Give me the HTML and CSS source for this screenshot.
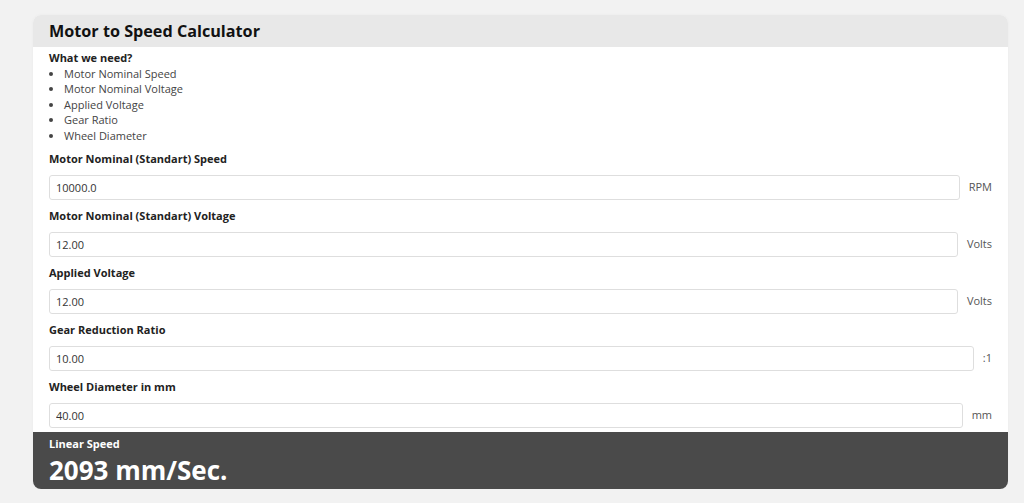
FILE: index.html
```html
<!DOCTYPE html>
<html>
<head>
<meta charset="utf-8">
<link rel="stylesheet" href="styles.css">
</head>
<body>
<div class="card">
  <div class="card-header"><h1 class="title">Motor to Speed Calculator</h1></div>
  <div class="card-body">
    <div class="need-title">What we need?</div>
    <ul class="need-list">
      <li>Motor Nominal Speed</li>
      <li>Motor Nominal Voltage</li>
      <li>Applied Voltage</li>
      <li>Gear Ratio</li>
      <li>Wheel Diameter</li>
    </ul>
    <div class="field">
      <label class="field-label">Motor Nominal (Standart) Speed</label>
      <div class="field-row"><input class="field-input" type="text" value="10000.0"><span class="unit">RPM</span></div>
    </div>
    <div class="field">
      <label class="field-label">Motor Nominal (Standart) Voltage</label>
      <div class="field-row"><input class="field-input" type="text" value="12.00"><span class="unit">Volts</span></div>
    </div>
    <div class="field">
      <label class="field-label">Applied Voltage</label>
      <div class="field-row"><input class="field-input" type="text" value="12.00"><span class="unit">Volts</span></div>
    </div>
    <div class="field">
      <label class="field-label">Gear Reduction Ratio</label>
      <div class="field-row"><input class="field-input" type="text" value="10.00"><span class="unit">:1</span></div>
    </div>
    <div class="field">
      <label class="field-label">Wheel Diameter in mm</label>
      <div class="field-row"><input class="field-input" type="text" value="40.00"><span class="unit">mm</span></div>
    </div>
  </div>
  <div class="result">
    <div class="result-label">Linear Speed</div>
    <div class="result-value">2093 mm/Sec.</div>
  </div>
</div>
</body>
</html>
```
FILE: styles.css
```css
html, body {
  margin: 0;
  padding: 0;
  background: #f2f2f2;
  font-family: "Open Sans", "Liberation Sans", sans-serif;
  color: #333;
}
body {
  padding: 15px 16px 0 33px;
}
.card {
  background: #fff;
  border-radius: 8px;
  overflow: hidden;
  box-shadow: 0 0 3px rgba(0,0,0,0.04);
}
.card-header {
  height: 32px;
  background: #e8e8e8;
  display: flex;
  align-items: center;
  padding: 0 16px;
}
.title {
  margin: 0;
  font-size: 16.2px;
  font-weight: 700;
  color: #111;
}
.card-body {
  padding: 3px 16px 4px 16px;
  font-size: 11px;
  line-height: 15.6px;
}
.need-title {
  font-weight: 700;
  color: #222;
}
.need-list {
  margin: 0 0 7px 0;
  padding-left: 15px;
  color: #444;
}
.field-label {
  display: block;
  font-weight: 700;
  color: #222;
  line-height: 16px;
  margin-bottom: 8px;
}
.field-row {
  display: flex;
  align-items: center;
  margin-bottom: 8px;
}
.field:last-child .field-row {
  margin-bottom: 0;
}
.field-input {
  flex: 1;
  height: 25px;
  box-sizing: border-box;
  border: 1px solid #dedede;
  border-radius: 3px;
  padding: 0 6px;
  font-family: inherit;
  font-size: 11px;
  color: #333;
  background: #fff;
  outline: none;
}
.unit {
  padding-left: 9px;
  color: #555;
  font-size: 11px;
}
.result {
  background: #4a4a4a;
  color: #fff;
  padding: 4px 16px 1px 16px;
}
.result-label {
  font-size: 11px;
  font-weight: 700;
  line-height: 16px;
}
.result-value {
  font-size: 26px;
  font-weight: 700;
  line-height: 36px;
}
```
